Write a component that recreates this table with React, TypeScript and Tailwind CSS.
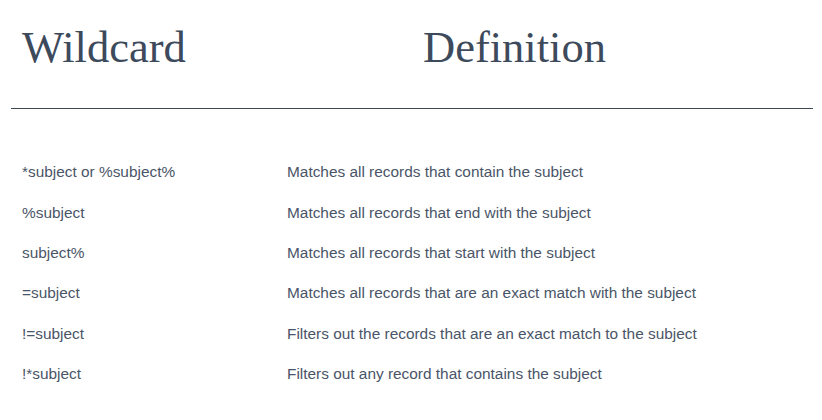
import React from 'react';

const rows = [
  { wildcard: '*subject or %subject%', definition: 'Matches all records that contain the subject' },
  { wildcard: '%subject', definition: 'Matches all records that end with the subject' },
  { wildcard: 'subject%', definition: 'Matches all records that start with the subject' },
  { wildcard: '=subject', definition: 'Matches all records that are an exact match with the subject' },
  { wildcard: '!=subject', definition: 'Filters out the records that are an exact match to the subject' },
  { wildcard: '!*subject', definition: 'Filters out any record that contains the subject' },
];

export default function App() {
  return (
    <div className="min-h-[420px] bg-white">
      <div className="ml-[11px] mr-[9px]">
        {/* Header */}
        <div
          className="grid grid-cols-2 border-b border-[#3d4852] pt-[21px] pb-[34px] text-[44.5px] leading-[53px] text-[#3d4a5c]"
          style={{ fontFamily: '"Liberation Serif", "DejaVu Serif", serif' }}
        >
          <div className="px-[11px]">Wildcard</div>
          <div className="px-[11px]">Definition</div>
        </div>

        {/* Rows */}
        <div
          className="mt-[43px] text-[15.4px] leading-5 text-[#4a5568]"
          style={{ fontFamily: '"Liberation Sans", Arial, sans-serif' }}
        >
          {rows.map((row, i) => (
            <div key={i} className="grid grid-cols-[265px_1fr] px-[11px] py-[10.2px]">
              <div>{row.wildcard}</div>
              <div>{row.definition}</div>
            </div>
          ))}
        </div>
      </div>
    </div>
  );
}
